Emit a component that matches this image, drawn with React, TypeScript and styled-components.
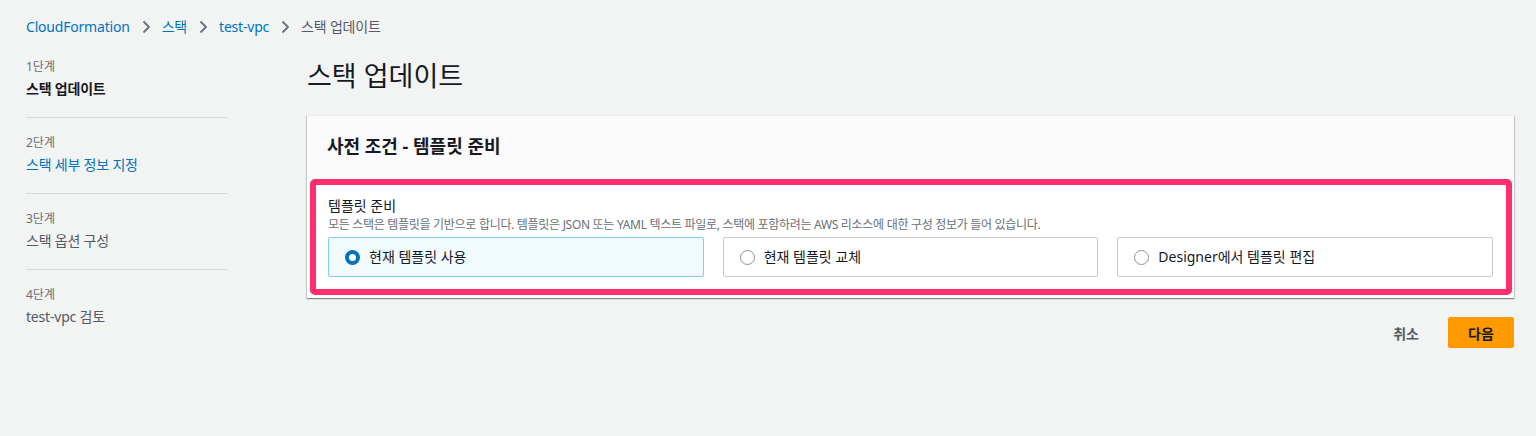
import React from "react";
import styled, { createGlobalStyle } from "styled-components";

const FONT = `"Noto Sans", "Noto Sans CJK KR", sans-serif`;

const Global = createGlobalStyle`
  html, body { margin: 0; padding: 0; background: #f2f3f3; }
  body { font-family: ${FONT}; color: #16191f; -webkit-font-smoothing: antialiased; }
  * { box-sizing: border-box; }
`;

const Page = styled.div`
  width: 1536px;
  height: 436px;
  padding: 17px 22px 0 26px;
  background: #f2f3f3;
  overflow: hidden;
`;

const Breadcrumbs = styled.nav`
  display: flex;
  align-items: center;
  gap: 10px;
  height: 20px;
  font-size: 14px;
  line-height: 20px;
  letter-spacing: -0.2px;
`;

const Crumb = styled.span<{ $current?: boolean }>`
  color: ${(p) => (p.$current ? "#545b64" : "#0073bb")};
`;

const Chevron = () => (
  <svg width="12" height="14" viewBox="0 0 12 14" fill="none">
    <path d="M3.5 1.5 L9 7 L3.5 12.5" stroke="#687078" strokeWidth="1.8" />
  </svg>
);

const Layout = styled.div`
  display: grid;
  grid-template-columns: 201px 1fr;
  column-gap: 80px;
  margin-top: 18px;
`;

const Steps = styled.ol`
  list-style: none;
  margin: 0;
  padding: 0;
`;

const Step = styled.li`
  padding: 4px 0 18px;
  border-bottom: 1px solid #d5dbdb;
  margin-bottom: 13px;
  &:last-child { border-bottom: none; }
`;

const StepNum = styled.div`
  font-size: 12px;
  line-height: 16px;
  color: #687078;
`;

const StepTitle = styled.div<{ $state: "active" | "link" | "idle" }>`
  margin-top: 4px;
  font-size: 14px;
  line-height: 20px;
  letter-spacing: -0.2px;
  color: ${(p) => (p.$state === "active" ? "#16191f" : p.$state === "link" ? "#0073bb" : "#545b64")};
  font-weight: ${(p) => (p.$state === "active" ? 700 : 400)};
`;

const Content = styled.div`
  display: flex;
  flex-direction: column;
`;

const Title = styled.h1`
  margin: 0;
  padding-top: 1px;
  font-size: 27px;
  line-height: 40px;
  font-weight: 400;
  color: #16191f;
`;

const Panel = styled.section`
  margin-top: 19px;
  background: #fff;
  box-shadow: 0 1px 1px 0 rgba(0, 28, 36, 0.3), 1px 1px 1px 0 rgba(0, 28, 36, 0.15), -1px 1px 1px 0 rgba(0, 28, 36, 0.15);
  border-top: 1px solid #eaeded;
`;

const PanelHeader = styled.header`
  background: #fafafa;
  height: 63px;
  padding: 0 20px 4px;
  display: flex;
  align-items: center;
  font-size: 18px;
  font-weight: 700;
  line-height: 22px;
`;

const PanelBody = styled.div`
  background: #fff;
  padding: 0 2px 3px 3px;
`;

const Highlight = styled.div`
  border: 6px solid #ff2d6e;
  border-radius: 5px;
  padding: 11px 13px 12px 12px;
`;

const Label = styled.div`
  font-size: 14px;
  line-height: 20px;
  color: #16191f;
`;

const Description = styled.div`
  font-size: 12px;
  line-height: 16px;
  color: #687078;
  margin-top: 1px;
  letter-spacing: -0.3px;
`;

const Tiles = styled.div`
  display: grid;
  grid-template-columns: repeat(3, 1fr);
  column-gap: 19px;
  margin-top: 4px;
`;

const Tile = styled.label<{ $selected?: boolean }>`
  display: flex;
  align-items: center;
  gap: 9px;
  height: 40px;
  padding: 0 16px;
  border: 1px solid ${(p) => (p.$selected ? "#7fd0e5" : "#c6cccd")};
  background: ${(p) => (p.$selected ? "#f1faff" : "#fff")};
  border-radius: 2px;
  font-size: 14px;
  line-height: 20px;
  color: #16191f;
`;

const Radio = styled.span<{ $checked?: boolean }>`
  width: 15px;
  height: 15px;
  border-radius: 50%;
  flex: none;
  border: ${(p) => (p.$checked ? "4px solid #0073bb" : "1.5px solid #879596")};
  background: #fff;
`;

const Actions = styled.div`
  display: flex;
  justify-content: flex-end;
  align-items: center;
  gap: 15px;
  margin-top: 19px;
`;

const TextButton = styled.button`
  border: none;
  background: none;
  font-family: ${FONT};
  font-size: 14px;
  font-weight: 700;
  color: #545b64;
  padding: 0 14px;
  height: 30px;
`;

const PrimaryButton = styled.button`
  border: 1px solid #ff9900;
  background: #ff9900;
  border-radius: 2px;
  font-family: ${FONT};
  font-size: 14px;
  font-weight: 700;
  color: #16191f;
  height: 31px;
  width: 66px;
`;

const steps = [
  { num: "1단계", title: "스택 업데이트", state: "active" as const },
  { num: "2단계", title: "스택 세부 정보 지정", state: "link" as const },
  { num: "3단계", title: "스택 옵션 구성", state: "idle" as const },
  { num: "4단계", title: "test-vpc 검토", state: "idle" as const },
];

const tiles = [
  { label: "현재 템플릿 사용", selected: true },
  { label: "현재 템플릿 교체", selected: false },
  { label: "Designer에서 템플릿 편집", selected: false },
];

export default function App() {
  return (
    <Page>
      <Global />
      <Breadcrumbs>
        <Crumb>CloudFormation</Crumb>
        <Chevron />
        <Crumb>스택</Crumb>
        <Chevron />
        <Crumb>test-vpc</Crumb>
        <Chevron />
        <Crumb $current>스택 업데이트</Crumb>
      </Breadcrumbs>
      <Layout>
        <Steps>
          {steps.map((s) => (
            <Step key={s.num}>
              <StepNum>{s.num}</StepNum>
              <StepTitle $state={s.state}>{s.title}</StepTitle>
            </Step>
          ))}
        </Steps>
        <Content>
          <Title>스택 업데이트</Title>
          <Panel>
            <PanelHeader>사전 조건 - 템플릿 준비</PanelHeader>
            <PanelBody>
              <Highlight>
                <Label>템플릿 준비</Label>
                <Description>
                  모든 스택은 템플릿을 기반으로 합니다. 템플릿은 JSON 또는 YAML 텍스트 파일로, 스택에 포함하려는 AWS 리소스에 대한 구성 정보가 들어 있습니다.
                </Description>
                <Tiles>
                  {tiles.map((t) => (
                    <Tile key={t.label} $selected={t.selected}>
                      <Radio $checked={t.selected} />
                      {t.label}
                    </Tile>
                  ))}
                </Tiles>
              </Highlight>
            </PanelBody>
          </Panel>
          <Actions>
            <TextButton>취소</TextButton>
            <PrimaryButton>다음</PrimaryButton>
          </Actions>
        </Content>
      </Layout>
    </Page>
  );
}
